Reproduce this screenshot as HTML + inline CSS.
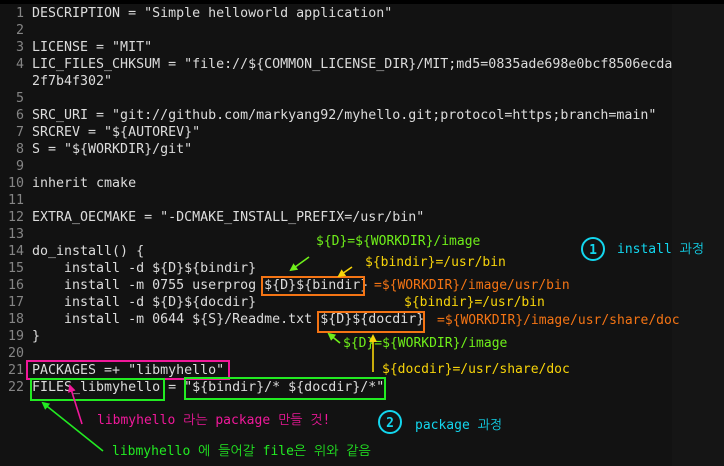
<!DOCTYPE html>
<html><head><meta charset="utf-8"><style>
html,body{margin:0;padding:0;}
body{width:724px;height:466px;background:#151515;position:relative;overflow:hidden;font-family:"DejaVu Sans Mono","Liberation Mono","NanumGothic",monospace;}
#top{position:absolute;left:0;top:0;width:724px;height:4px;background:#000;}
#ed{position:absolute;left:0;top:4px;width:672px;height:462px;background:#121212;}
#code{position:absolute;left:0;top:4.5px;margin:0;font-size:13.3px;line-height:17px;color:#dcdcdc;white-space:pre;}
.ln{display:inline-block;width:24px;text-align:right;color:#858585;margin-right:8px;}
.a{position:absolute;white-space:pre;font-size:13px;line-height:16px;font-weight:normal;font-family:"DejaVu Sans Mono","NanumGothic","Noto Sans CJK KR",monospace;}
.g{color:#6fef1a}.y{color:#f7d40a}.o{color:#f47414}.p{color:#f0189a}.c{color:#13d6ee}.gg{color:#22ea22}
svg{position:absolute;left:0;top:0;}
</style></head><body>
<div id="top"></div><div id="ed"></div>
<pre id="code"><span class="ln">1</span>DESCRIPTION = "Simple helloworld application"
<span class="ln">2</span>
<span class="ln">3</span>LICENSE = "MIT"
<span class="ln">4</span>LIC_FILES_CHKSUM = "file://${COMMON_LICENSE_DIR}/MIT;md5=0835ade698e0bcf8506ecda
<span class="ln"></span>2f7b4f302"
<span class="ln">5</span>
<span class="ln">6</span>SRC_URI = "git://github.com/markyang92/myhello.git;protocol=https;branch=main"
<span class="ln">7</span>SRCREV = "${AUTOREV}"
<span class="ln">8</span>S = "${WORKDIR}/git"
<span class="ln">9</span>
<span class="ln">10</span>inherit cmake
<span class="ln">11</span>
<span class="ln">12</span>EXTRA_OECMAKE = "-DCMAKE_INSTALL_PREFIX=/usr/bin"
<span class="ln">13</span>
<span class="ln">14</span>do_install() {
<span class="ln">15</span>    install -d ${D}${bindir}
<span class="ln">16</span>    install -m 0755 userprog ${D}${bindir}
<span class="ln">17</span>    install -d ${D}${docdir}
<span class="ln">18</span>    install -m 0644 ${S}/Readme.txt ${D}${docdir}
<span class="ln">19</span>}
<span class="ln">20</span>
<span class="ln">21</span>PACKAGES =+ "libmyhello"
<span class="ln">22</span>FILES_libmyhello = "${bindir}/* ${docdir}/*"</pre>

<div class="a g" style="left:316px;top:234px">${D}=${WORKDIR}/image</div>
<div class="a y" style="left:365px;top:255px">${bindir}=/usr/bin</div>
<div class="a o" style="left:374px;top:278px">=${WORKDIR}/image/usr/bin</div>
<div class="a y" style="left:404px;top:295px">${bindir}=/usr/bin</div>
<div class="a o" style="left:437px;top:313px">=${WORKDIR}/image/usr/share/doc</div>
<div class="a g" style="left:343px;top:336px">${D}=${WORKDIR}/image</div>
<div class="a y" style="left:382px;top:362px">${docdir}=/usr/share/doc</div>
<div class="a c" style="left:617px;top:242px">install 과정</div>
<div class="a p" style="left:97px;top:413px">libmyhello 라는 package 만들 것!</div>
<div class="a gg" style="left:112px;top:444px">libmyhello 에 들어갈 file은 위와 같음</div>
<div class="a c" style="left:415px;top:418px">package 과정</div>

<svg width="724" height="466" viewBox="0 0 724 466">
<defs>
<marker id="mg" markerWidth="8" markerHeight="8" refX="6" refY="4" orient="auto" markerUnits="userSpaceOnUse"><path d="M0,0 L8,4 L0,8 z" fill="#6fef1a"/></marker>
<marker id="my" markerWidth="8" markerHeight="8" refX="6" refY="4" orient="auto" markerUnits="userSpaceOnUse"><path d="M0,0 L8,4 L0,8 z" fill="#f7d40a"/></marker>
<marker id="mp" markerWidth="8" markerHeight="8" refX="6" refY="4" orient="auto" markerUnits="userSpaceOnUse"><path d="M0,0 L8,4 L0,8 z" fill="#f0189a"/></marker>
<marker id="mgg" markerWidth="8" markerHeight="8" refX="6" refY="4" orient="auto" markerUnits="userSpaceOnUse"><path d="M0,0 L8,4 L0,8 z" fill="#22ea22"/></marker>
</defs>
<g fill="none" stroke-width="2">
<rect x="262" y="277" width="102" height="18" stroke="#f47414"/>
<rect x="318" y="312" width="106" height="20" stroke="#f47414"/>
<rect x="27" y="361" width="202" height="18" stroke="#f0189a"/>
<rect x="31" y="379" width="133" height="21" stroke="#22ea22"/>
<rect x="185" y="378" width="200" height="21" stroke="#22ea22"/>
<circle cx="593" cy="249" r="11" stroke="#13d6ee"/>
<circle cx="390" cy="422" r="11" stroke="#13d6ee"/>
</g>
<g stroke-width="1.6">
<line x1="309" y1="257" x2="291" y2="270" stroke="#6fef1a" marker-end="url(#mg)"/>
<line x1="352" y1="267" x2="339" y2="276" stroke="#f7d40a" marker-end="url(#my)"/>
<line x1="340" y1="343" x2="329" y2="334" stroke="#6fef1a" marker-end="url(#mg)"/>
<line x1="373" y1="372" x2="373" y2="336" stroke="#f7d40a" marker-end="url(#my)"/>
<line x1="82" y1="424" x2="70" y2="386" stroke="#f0189a" marker-end="url(#mp)"/>
<line x1="103" y1="451" x2="43" y2="403" stroke="#22ea22" marker-end="url(#mgg)"/>
</g>
<text x="593" y="254" font-size="13" font-weight="bold" fill="#13d6ee" text-anchor="middle" font-family="DejaVu Sans Mono,monospace">1</text>
<text x="390" y="427" font-size="13" font-weight="bold" fill="#13d6ee" text-anchor="middle" font-family="DejaVu Sans Mono,monospace">2</text>
</svg>
</body></html>
